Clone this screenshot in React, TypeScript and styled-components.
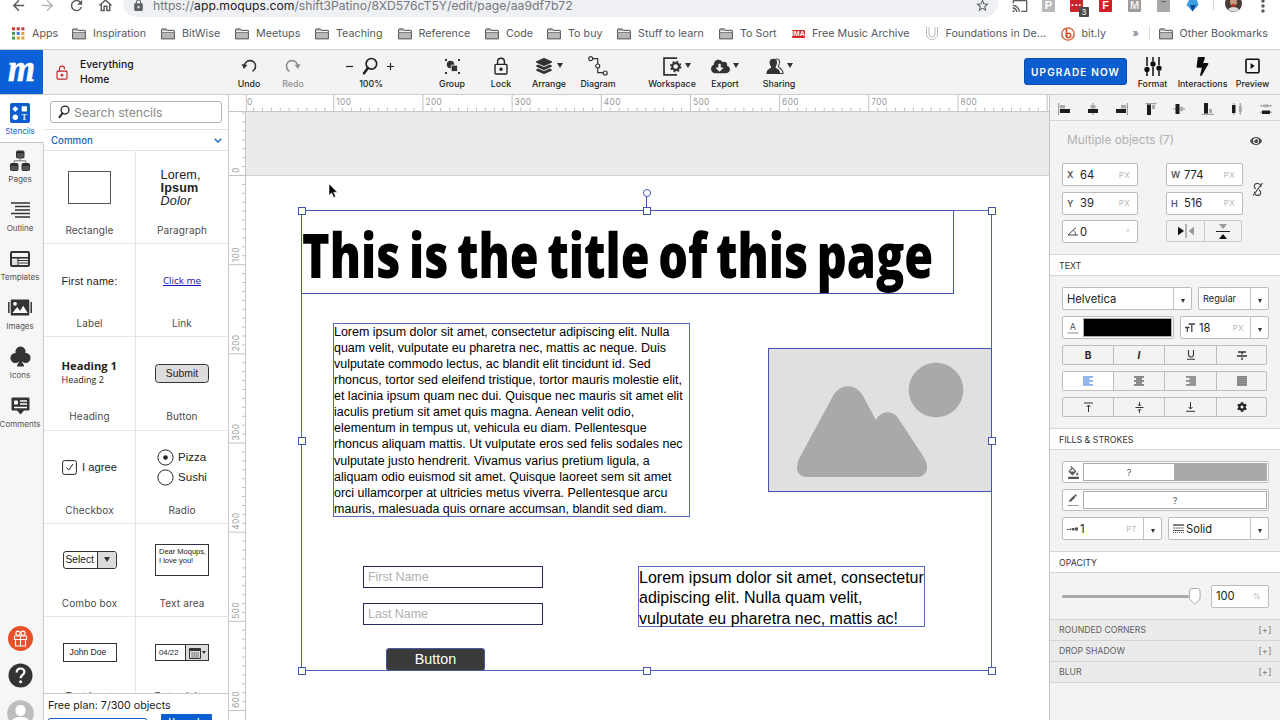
import React from "react";
import styled, { createGlobalStyle, css } from "styled-components";
import {
  MdArrowBack, MdArrowForward, MdRefresh, MdOutlineHome, MdStarBorder, MdCast, MdLock, MdMoreVert, MdEdit, MdFormatColorFill,
} from "react-icons/md";
import { FaBolt, FaCog, FaLayerGroup, FaEye, FaCloudDownloadAlt } from "react-icons/fa";
import { BsFillSuitClubFill } from "react-icons/bs";

const Global = createGlobalStyle`
  * { box-sizing: border-box; }
  body { margin: 0; overflow: hidden; background: #fff; }
  svg { display: block; flex: none; }
`;

const ui = `Inter, "Liberation Sans", sans-serif`;
const helv = `"Liberation Sans", Arial, sans-serif`;
const sel = "#4355b4";

const Page = styled.div`
  width: 1280px; height: 720px; overflow: hidden;
  display: flex; flex-direction: column;
  font-family: ${ui}; color: #333; white-space: nowrap;
`;

/* ---------- Browser chrome ---------- */
const AddressRow = styled.div`
  height: 28px; margin-top: -11px; flex: none;
  display: flex; align-items: center; color: #55585c; padding-left: 10px;
  & > svg { margin: 5px 0 0 11px; }
`;
const NavIcons = styled.div`
  display: flex; gap: 12px; width: 113px; margin-top: 5px;
`;
const Omnibox = styled.div`
  width: 875px; height: 28px; border-radius: 14px; background: #eef0f4;
  display: flex; align-items: center; padding: 5px 8px 0 9px;
`;
const Url = styled.div`
  font-size: 12.2px; line-height: 18px; color: #75787c; margin-left: 8px; flex: 1;
  b { font-weight: 400; color: #1f2124; }
`;
const Extensions = styled.div`
  display: flex; align-items: center; margin: 5px 0 0 14px; position: relative;
`;
const Ext = styled.div<{ $bg: string; $fg?: string; $gap: number }>`
  width: 13px; height: 13px; margin-left: ${(p) => p.$gap}px; border-radius: 1px;
  background: ${(p) => p.$bg}; color: ${(p) => p.$fg ?? "#fff"};
  font: 700 11px/13px ${helv}; text-align: center;
`;
const ExtDiamond = styled.svg`margin-left: 16px;`;
const ExtCount = styled.div`
  position: absolute; left: 67px; top: 9px; width: 10px; height: 10px; border-radius: 1px;
  background: #4a4a4a; color: #fff; font: 8px/10px ${ui}; text-align: center;
`;
const ChromeDivider = styled.div`
  width: 1px; height: 14px; background: #d5d7da; margin-left: 14px;
`;
const Avatar = styled.div`
  width: 17px; height: 17px; border-radius: 50%; margin-left: 11px; overflow: hidden; background: #4a3d38;
`;
const Bookmarks = styled.div`
  height: 33px; flex: none; display: flex; align-items: center; padding: 1px 0 0 12px;
  border-bottom: 1px solid #cfcfcf; font-size: 10.7px; letter-spacing: 0.03px; color: #55585c;
`;
const Bookmark = styled.div<{ $w: number; $gap?: number }>`
  display: flex; align-items: center; gap: 7px; width: ${(p) => p.$w}px;
  margin-right: ${(p) => p.$gap ?? 15}px; flex: none;
`;
const Divider = styled.div`width: 1px; height: 15px; background: #ddd; margin-right: 9px;`;
const ImaBadge = styled.span`
  width: 15px; height: 8px; background: #cf2a26; color: #fff; font: 700 7px/8px ${helv}; text-align: center; border-radius: 1px;
`;

const Folder = () => (
  <svg width="14" height="12" viewBox="0 0 14 12">
    <path d="M.6 10.9V1.6a.7.7 0 0 1 .7-.7h3.9l1.2 1.4h6.3a.7.7 0 0 1 .7.7v7.9z" fill="#b9b9b9" stroke="#555" strokeWidth="1" />
    <path d="M1.2 3.6h11.6" stroke="#f4f4f4" strokeWidth="1.1" />
    <path d="M.6 4.5h12.8" stroke="#666" strokeWidth=".7" />
  </svg>
);
const AppsIcon = () => (
  <svg width="13" height="13" viewBox="0 0 13 13">
    {["#d03a33", "#d03a33", "#d03a33", "#3f9b52", "#3d73d8", "#e0a429", "#3f9b52", "#d9a12b", "#e0a429"].map((c, i) => (
      <rect key={i} x={(i % 3) * 4.7} y={Math.floor(i / 3) * 4.6 + 0.3} width="3" height="3" fill={c} />
    ))}
  </svg>
);

/* ---------- App toolbar ---------- */
const Toolbar = styled.div`
  height: 45px; flex: none; display: flex; background: #f3f3f3; border-bottom: 1px solid #cdcdcd; padding-right: 2px;
`;
const Logo = styled.div`
  width: 43px; background: #0b5fd8; display: flex; align-items: center; justify-content: center;
`;
const DocTitle = styled.div`
  width: 184px; display: flex; align-items: center; gap: 12px; padding: 0 0 0 13px;
  font-size: 10.4px; font-weight: 500; line-height: 15.3px; color: #161616;
`;
const Tool = styled.div<{ $w: number; $ml?: number; $dim?: boolean; $black?: boolean }>`
  width: ${(p) => p.$w}px; margin-left: ${(p) => p.$ml ?? 0}px; flex: none;
  display: flex; flex-direction: column; align-items: center; padding-top: 5px;
  color: ${(p) => (p.$black ? "#0d0d0d" : "#333")};
  ${(p) => p.$dim && css`color: #8f8f8f;`}
`;
const ToolIcon = styled.div<{ $gap?: number; $shift?: number }>`
  height: 22px; display: flex; align-items: center; gap: ${(p) => p.$gap ?? 5}px; margin-left: ${(p) => p.$shift ?? 0}px;
`;
const ToolLabel = styled.div<{ $dim?: boolean }>`
  font-size: 8.8px; font-weight: 500; line-height: 13px; color: ${(p) => (p.$dim ? "#8f8f8f" : "#1d1d1d")};
`;
const Upgrade = styled.button`
  width: 103px; height: 27px; margin: 8px 0 0 auto; padding: 0; border: 1px solid #0a4cae; border-radius: 3px;
  background: #0b5dd0; color: #fff; font: 600 10px ${ui}; letter-spacing: 1.15px;
`;
const Caret = styled.span<{ $size?: number }>`
  flex: none; width: 0; height: 0; border: ${(p) => p.$size ?? 2.6}px solid transparent; border-bottom: 0;
  border-top: ${(p) => (p.$size ?? 2.6) * 1.7}px solid #333;
`;
const ToolCaret = styled(Caret)`
  border-width: 5px 3px 0; margin-top: -2px;
`;

/* ---------- Main area ---------- */
const Main = styled.div`flex: 1; min-height: 0; display: flex;`;
const Rail = styled.div`
  width: 44px; flex: none; display: flex; flex-direction: column; background: #f6f6f6;
`;
const RailItem = styled.div<{ $active?: boolean }>`
  height: ${(p) => (p.$active ? 48 : 49)}px; flex: none; display: flex; flex-direction: column; align-items: center;
  padding: 5px 3px 0 0; border-right: 1px solid #c9c9c9;
  font-size: 8.1px; line-height: 13px; letter-spacing: -0.05px; color: #555;
  ${(p) => p.$active && css`background: #fff; color: #1763c6; border-right-color: #fff; border-bottom: 1px solid #c4c4c4;`}
`;
const RailIcon = styled.div`height: 25px; display: flex; align-items: center;`;
const RailBottom = styled.div`
  flex: 1; display: flex; flex-direction: column; align-items: center; justify-content: flex-end; gap: 12px;
  border-right: 1px solid #c9c9c9; padding-right: 3px; margin-bottom: -7px;
`;

const Stencils = styled.div`
  width: 185px; flex: none; display: flex; flex-direction: column; border-right: 1px solid #c9c9c9; background: #fff;
`;
const Search = styled.div`
  height: 22px; margin: 6px 6px 6px; border: 1px solid #b3b3b3; border-radius: 3px;
  display: flex; align-items: center; gap: 4px; padding-left: 7px; font-size: 12.3px; color: #8a8a8a; flex: none;
`;
const Category = styled.div`
  height: 22px; flex: none; border: 1px solid #e3e3e3; border-width: 1px 0; padding: 0 6px 0 7px;
  display: flex; align-items: center; justify-content: space-between; font-size: 9.7px; font-weight: 500; color: #1763b8;
`;
const StencilGrid = styled.div`
  flex: 1; min-height: 0; overflow: hidden; display: grid; grid-template-columns: 92px 92px; grid-auto-rows: 93.2px;
`;
const Stencil = styled.div`
  border-bottom: 1px solid #e6e6e6; display: flex; flex-direction: column;
  &:nth-child(odd) { border-right: 1px solid #e6e6e6; }
`;
const Preview = styled.div`
  height: 72px; display: flex; align-items: center; justify-content: center; font-family: ${helv}; color: #222;
`;
const StencilName = styled.div`
  text-align: center; font-size: 10px; line-height: 15px; letter-spacing: 0.12px; color: #4b4b4b;
`;
const RectSample = styled.div`width: 43px; height: 33px; border: 1px solid #555;`;
const ParaSample = styled.div`font-size: 12.6px; line-height: 13.1px; letter-spacing: 0.15px; padding-top: 3px; width: 43px;`;
const LabelSample = styled.div`font: 10.8px ${helv}; letter-spacing: 0.18px; padding-top: 2px;`;
const LinkSample = styled.div`font: 9.8px "Open Sans", sans-serif; color: #1111b5; text-decoration: underline; padding-top: 1px;`;
const HeadingSample = styled.div`
  font: 9px/14px "Open Sans", sans-serif; width: 56px;
  strong { display: block; font-size: 11.2px; line-height: 14px; }
`;
const ButtonSample = styled.div`
  width: 54px; height: 19px; border: 1px solid #333; border-radius: 3.5px; background: #dcdcdc;
  font: 10.4px/17px ${helv}; text-align: center;
`;
const CheckSample = styled.div`display: flex; align-items: center; gap: 5px; font-size: 11.2px; padding-top: 1px;`;
const RadioSample = styled.div`
  display: grid; gap: 3px; font-size: 11.5px; padding-top: 1px;
  div { display: flex; align-items: center; gap: 4px; line-height: 17px; }
`;
const ComboSample = styled.div`
  width: 54px; height: 18px; border: 1px solid #333; border-radius: 3px; display: flex; overflow: hidden;
  font: 10.2px/16px ${helv}; padding-left: 2px; justify-content: space-between;
  & > span { width: 19px; background: #dcdcdc; border-left: 1px solid #333; display: flex; align-items: center; justify-content: center; }
`;
const AreaSample = styled.div`
  width: 54px; height: 32px; border: 1px solid #333; padding: 2px 0 0 3px;
  font: 7.5px/9.2px ${helv};
`;
const InputSample = styled.div`
  width: 54px; height: 19px; border: 1px solid #333; font: 8.6px/17px ${helv}; text-align: center; padding-right: 3px;
`;
const DateSample = styled.div`
  width: 54px; height: 17px; border: 1px solid #333; font: 7.8px/16px ${helv}; padding-left: 3px;
  display: flex; justify-content: space-between;
  & > span { width: 23px; background: #dcdcdc; border-left: 1px solid #333; display: flex; align-items: center; justify-content: center; gap: 1px; }
`;
const PlanFooter = styled.div`
  height: 27px; flex: none; overflow: hidden; border-top: 1px solid #c9c9c9; padding: 4px 0 0 4px;
  font-size: 10.7px; line-height: 16px; color: #1b1b1b;
`;
const PlanRow = styled.div`display: flex; gap: 14px;`;
const PlanBar = styled.div`width: 99px; height: 12px; margin-top: 4px; border: 1px solid #1b63c9; border-radius: 2px;`;
const PlanButton = styled.div`
  width: 51px; height: 20px; background: #0b5dd0; color: #fff; font: 600 8.6px/16px ${ui}; text-align: center; border-radius: 1px;
`;

/* ---------- Canvas ---------- */
const Workspace = styled.div`flex: 1; min-width: 0; display: flex; flex-direction: column; background: #fff;`;
const WorkBody = styled.div`flex: 1; min-height: 0; display: flex;`;
const Canvas = styled.div`
  flex: 1; position: relative; overflow: hidden; background: #fff;
`;
const Offpage = styled.div`height: 64px; background: #ebebeb; border-bottom: 1px solid #cfcfcf;`;
const Node = styled.div<{ $x: number; $y: number; $w: number; $h: number }>`
  position: absolute; left: ${(p) => p.$x}px; top: ${(p) => p.$y}px; width: ${(p) => p.$w}px; height: ${(p) => p.$h}px;
`;
const TitleNode = styled(Node)`border: 1px solid ${sel};`;
const TitleText = styled.div`
  font: 800 62px/85px "Open Sans", sans-serif; color: #000; word-spacing: -4.8px;
  transform: scaleX(0.755); transform-origin: 0 50%; width: max-content; margin-top: 1px;
`;
const TextNode = styled(Node)<{ $size: number; $lh: number }>`
  border: 1px solid #5a69ba; color: #000; font: ${(p) => p.$size}px/${(p) => p.$lh}px ${helv}; text-indent: 0;
`;
const FieldNode = styled(Node)`
  border: 1.5px solid #23285f; font: 12.4px/20px ${helv}; color: #b1b1b1; padding-left: 4px;
`;
const ButtonNode = styled(Node)`
  border: 1px solid #4a57a0; background: #3a3a3a; border-radius: 3px; color: #fff; font: 14.3px/20px ${helv}; text-align: center;
`;
const ImageNode = styled(Node)`border: 1px solid ${sel}; background: #e0e0e0;`;
const SelectionBox = styled(Node)`border: 1px solid #5061bf;`;
const Handle = styled(Node)<{ $round?: boolean }>`
  background: #fff; border: 1px solid ${sel}; ${(p) => p.$round && css`border-radius: 50%;`}
`;
const Stem = styled(Node)`background: ${sel};`;

/* ---------- Format panel ---------- */
const Panel = styled.div`
  width: 231px; flex: none; background: #f3f3f3; border-left: 1px solid #c4c4c4; display: flex; flex-direction: column;
`;
const AlignRow = styled.div`
  height: 26px; flex: none; border-bottom: 1px solid #d4d4d4; display: flex; align-items: center;
  justify-content: space-between; padding: 2px 8px 0 8px;
`;
const ObjectHead = styled.div`
  height: 42px; flex: none; display: flex; justify-content: space-between; padding: 11px 18px 0 17px;
  font-size: 11.8px; line-height: 16px; color: #b0b0b0;
  svg { margin-top: 3px; color: #444; }
`;
const Geometry = styled.div`
  height: 91px; flex: none; display: flex; align-items: flex-start; padding-left: 12px;
`;
const FieldGrid = styled.div`
  display: grid; grid-template-columns: 76px 77px; grid-auto-rows: 23px; gap: 5.5px 28px; margin-right: 9px;
`;
const boxed = css`border: 1px solid #bcbcbc; border-radius: 2px; background: #fff;`;
const Field = styled.div<{ $w?: number; $small?: boolean }>`
  ${boxed} height: 23px; display: flex; align-items: center; padding-left: 4px; flex: none;
  width: ${(p) => (p.$w ? `${p.$w}px` : "auto")}; font-size: ${(p) => (p.$small ? 9.2 : 11.2)}px; color: #222;
`;
const FieldKey = styled.span<{ $w?: number }>`
  font-size: 9px; font-weight: 600; color: #555; width: ${(p) => p.$w ?? 13}px; display: flex; align-items: center;
`;
const Unit = styled.span<{ $r?: number }>`
  margin-left: auto; padding-right: ${(p) => p.$r ?? 7}px; font-size: 8px; letter-spacing: 0.3px; color: #b8b8b8;
`;
const Drop = styled.span<{ $auto?: boolean }>`
  width: 18px; height: 21px; flex: none; border-left: 1px solid #c4c4c4; display: flex; align-items: center; justify-content: center;
  padding-top: 4px; ${(p) => p.$auto && css`margin-left: auto;`}
`;
const FlipGroup = styled.div`
  border: 1px solid #c9c9c9; border-radius: 2px; display: grid; grid-template-columns: 1fr 1fr; width: 76px;
  place-items: center; height: 22px;
  & > :last-child { border-left: 1px solid #c9c9c9; width: 100%; height: 100%; display: grid; place-items: center; }
`;
const SectionHead = styled.div`
  height: 22px; flex: none; background: #fff; border: 1px solid #d6d6d6; border-width: 1px 0;
  padding-left: 9px; font-size: 8.8px; line-height: 21px; color: #333;
`;
const SectionBody = styled.div<{ $h: number }>`
  height: ${(p) => p.$h}px; flex: none; padding: 11px 0 0 12px; display: flex; flex-direction: column; gap: 6px;
`;
const FormRow = styled.div`display: flex; gap: 6px; height: 23px;`;
const Segments = styled.div`
  width: 205px; height: 20px; border: 1px solid #bebebe; border-radius: 2px; display: grid; grid-template-columns: 50px 51px 52px 50px;
`;
const Segment = styled.div<{ $on?: boolean }>`
  display: flex; align-items: center; justify-content: center; color: #222; font: 700 10px ${ui};
  background: ${(p) => (p.$on ? "#fff" : "transparent")};
  & + & { border-left: 1px solid #bebebe; }
`;
const ColorField = styled.div<{ $w: number; $h?: number }>`
  ${boxed} width: ${(p) => p.$w}px; height: ${(p) => p.$h ?? 23}px; display: flex; align-items: stretch; padding: 0 1px 0 0;
`;
const ColorKey = styled.span`width: 20px; display: flex; align-items: center; justify-content: center; color: #555;`;
const Swatch = styled.span<{ $c: string }>`
  flex: 1; margin: 1px 0; background: ${(p) => p.$c}; border: 1px solid #aaa; display: flex; align-items: center; justify-content: center;
  font-size: 9px; color: #555;
`;
const OpacityBody = styled.div`
  height: 46px; flex: none; display: flex; align-items: center; padding-left: 12px;
`;
const Track = styled.div`width: 127px; height: 3px; background: #a9a9a9; border-radius: 2px;`;
const Collapsed = styled.div`
  height: 21px; flex: none; background: #ebebeb; border-top: 1px solid #d4d4d4; padding: 0 8px 0 9px;
  display: flex; align-items: center; justify-content: space-between; font-size: 8.7px; color: #606060;
  &:last-child { border-bottom: 1px solid #d4d4d4; height: 22px; }
  span { letter-spacing: 0.5px; color: #777; }
`;

/* ---------- Rulers ---------- */
const UNIT = 8.917;
const RulerTop = () => {
  const zero = 15.6;
  return (
    <svg width="820" height="17" viewBox="0 0 820 17">
      {Array.from({ length: 90 }, (_, i) => i + 1).map((i) => {
        const x = zero + i * UNIT;
        return <path key={i} d={`M${x} ${i % 10 ? 12.5 : 0}V17`} stroke="#c2c2c2" />;
      })}
      {Array.from({ length: 9 }, (_, i) => (
        <text key={i} x={zero + i * UNIT * 10 + 2.5} y="9.5" fontFamily="Inter" fontSize="8.4" letterSpacing=".35" fill="#999">{i * 100}</text>
      ))}
      <path d="M17.3 0V17M0 16.5H820" stroke="#c6c6c6" />
    </svg>
  );
};
const RulerLeft = () => {
  const zero = 63.5;
  return (
    <svg width="17" height="608" viewBox="0 0 17 608">
      {Array.from({ length: 68 }, (_, i) => i - 7).map((i) => {
        const y = zero + i * UNIT;
        return <path key={i} d={`M${i % 10 ? 13 : 0} ${y}H17`} stroke="#c2c2c2" />;
      })}
      {Array.from({ length: 7 }, (_, i) => (
        <text key={i} transform={`translate(10.3 ${zero + i * UNIT * 10 - 2.5}) rotate(-90)`} fontFamily="Inter" fontSize="8.4" letterSpacing=".35" fill="#999">{i * 100}</text>
      ))}
      <path d="M16.5 0V608" stroke="#c6c6c6" />
    </svg>
  );
};

/* ---------- Icons ---------- */
const Padlock = ({ color, w, h, open }: { color: string; w: number; h: number; open?: boolean }) => (
  <svg width={w} height={h} viewBox="0 0 14 18" fill="none" stroke={color} strokeWidth="1.4">
    <rect x="1" y="7.4" width="12" height="9.6" rx="1" />
    <path d={open ? "M4 7.4V4.6a3 3 0 0 1 6-.4v1" : "M3.6 7.4V4.6a3.4 3.4 0 0 1 6.8 0v2.8"} />
    <circle cx="7" cy="12.2" r="1" fill={color} />
  </svg>
);
const UndoIcon = ({ flip }: { flip?: boolean }) => (
  <svg width="16" height="16" viewBox="0 0 16 16">
    <g transform={flip ? "matrix(-1 0 0 1 16 0)" : undefined}>
      <path d="M3.2 7.6C4 4.6 6.6 2.4 9.4 2.6c3 .2 5.2 2.7 5.1 5.6 0 2.4-1.3 4.2-3 5.2" fill="none" stroke="currentColor" strokeWidth="1.6" />
      <path d="M.6 6l5.9.9-3.7 4z" fill="currentColor" />
    </g>
  </svg>
);
const Magnifier = ({ s }: { s: number }) => (
  <svg width={s} height={s * 1.1} viewBox="0 0 16 17.6" fill="none" stroke="#222">
    <circle cx="9.4" cy="6.8" r="5.3" strokeWidth="1.7" />
    <path d="M5.9 11L2 16.2" strokeWidth="2.6" strokeLinecap="round" />
  </svg>
);
const GroupIcon = () => (
  <svg width="15" height="15" viewBox="0 0 15 15" fill="#333">
    <path d="M0 0h2v2H0zM13 0h2v2h-2zM0 13h2v2H0zM13 13h2v2h-2z" />
    <circle cx="5.5" cy="5.5" r="3.7" />
    <path d="M6.2 6.2h6.3v6.3H6.2z" stroke="#f3f3f3" strokeWidth=".8" />
  </svg>
);
const DiagramIcon = () => (
  <svg width="20" height="20" viewBox="0 0 20 20" fill="none" stroke="#333" strokeWidth="1.2">
    <path d="M4.5 2.7h5.2v13.9h5.7" />
    <g fill="#f3f3f3"><circle cx="2.7" cy="2.7" r="2" /><circle cx="9.7" cy="10" r="2" /><circle cx="17.2" cy="17" r="2" /></g>
  </svg>
);
const WorkspaceIcon = () => (
  <svg width="20" height="19" viewBox="0 0 20 19">
    <path d="M15 1.2H2V17.8h13" fill="none" stroke="#333" strokeWidth="1.7" />
    <circle cx="13.7" cy="9.5" r="3.4" fill="none" stroke="#333" strokeWidth="2.2" />
    <circle cx="13.7" cy="9.5" r="5" fill="none" stroke="#333" strokeWidth="1.5" strokeDasharray="2 1.93" />
  </svg>
);
const ShareIcon = () => (
  <svg width="18" height="17" viewBox="0 0 18 17">
    <path d="M9.5 1.2c3-.9 4.3 1 4 3.3-.1 2-.8 3-1.2 3.8.2 2.5 4.7 1.7 4.7 7.2h-4" fill="#f3f3f3" stroke="#444" strokeWidth="1.1" />
    <path d="M7.3.7c2.9 0 4 1.9 3.700 4.200-.2 1.800-.8 2.700-1.300 3.600v1.300c1.300 1.300 4.500 1.300 4.500 6.200H.5c0-4.900 3.200-4.900 4.500-6.200V8.500C4.300 7.500 3.800 6.700 3.600 4.900 3.300 2.600 4.400.7 7.300.7z" fill="#333" />
  </svg>
);
const FormatIcon = () => (
  <svg width="18" height="19" viewBox="0 0 18 19" stroke="#0d0d0d" fill="#0d0d0d" strokeWidth="1.5">
    <path d="M3 0v9M3 15v4M9 0v4M9 10v9M15 0v8M15 14v5" />
    <circle cx="3" cy="12.5" r="1.9" /><circle cx="9" cy="7" r="1.9" /><circle cx="15" cy="11.2" r="1.9" />
  </svg>
);
const PreviewIcon = () => (
  <svg width="15" height="16" viewBox="0 0 15 16">
    <rect x="1" y="1.2" width="13" height="13.6" rx="1" fill="none" stroke="#0d0d0d" strokeWidth="1.6" />
    <path d="M5.6 5v6l4-3z" fill="#0d0d0d" />
  </svg>
);
const StencilsIcon = () => (
  <svg width="20" height="20" viewBox="0 0 20 20">
    <rect width="20" height="20" rx="2" fill="#0b5dd0" />
    <path d="M5.3 2.9l3 3-3 3-3-3zM11.7 3.3h5.2v5.2h-5.2z" fill="#fff" />
    <circle cx="5.3" cy="14.2" r="2.7" fill="#fff" />
    <text x="11.2" y="17.2" fontFamily="Liberation Serif" fontWeight="700" fontSize="9" fill="#d5e4fb">T</text>
  </svg>
);
const PagesIcon = () => (
  <svg width="20" height="22" viewBox="0 0 20 22">
    <g fill="#555" stroke="#333"><rect x="6.5" y="1" width="7.5" height="7" rx="1" /><rect x=".5" y="13.5" width="7.5" height="7" rx="1" /><rect x="12" y="13.5" width="7.5" height="7" rx="1" /></g>
    <path d="M7 2.500h6.500M1 15h6.500M12.500 15H19" stroke="#222" strokeWidth="1.5" />
    <path d="M10.2 8v2.800M4.200 13v-2.200h11.600V13" fill="none" stroke="#777" />
  </svg>
);
const OutlineIcon = () => (
  <svg width="20" height="16" viewBox="0 0 20 16" stroke="#333" strokeWidth="1.7">
    <path d="M1 1h19M5 4.500h15M5 8h15M1 11.500h19M5 15h15" />
  </svg>
);
const TemplatesIcon = () => (
  <svg width="20" height="16" viewBox="0 0 20 16">
    <rect x="1" y="1" width="18" height="14" rx="1" fill="#f6f6f6" stroke="#333" strokeWidth="2" />
    <path d="M1 6.800h18" stroke="#333" strokeWidth="1.7" /><path d="M8 7v8M8 9.500h11M9 12h9" stroke="#333" strokeWidth="1.2" />
    <path d="M2 9h5v5H2z" fill="#ddd" />
  </svg>
);
const ImagesIcon = () => (
  <svg width="24" height="18" viewBox="0 0 24 18">
    <path d="M.8 3v11M23.200 3v11" stroke="#333" strokeWidth="1.5" />
    <rect x="2.7" y=".5" width="18.6" height="16" rx="1" fill="#333" />
    <circle cx="7" cy="4.8" r="1.9" fill="#fff" /><path d="M4.500 14l4.600-6 3 3.700 3.200-5 4.400 7.300z" fill="#fff" />
  </svg>
);
const CommentsIcon = () => (
  <svg width="19" height="18" viewBox="0 0 19 18">
    <path d="M1.500.5h16a1 1 0 0 1 1 1v11a1 1 0 0 1-1 1H13l-3.500 4-3.500-4H1.500a1 1 0 0 1-1-1v-11a1 1 0 0 1 1-1z" fill="#333" />
    <rect x="3" y="3.5" width="4" height="4" rx="1" fill="#fff" /><path d="M9 4h7M9 7h7M3 10.500h13" stroke="#fff" strokeWidth="1.3" />
  </svg>
);
const GiftIcon = () => (
  <svg width="25" height="25" viewBox="0 0 25 25">
    <circle cx="12.5" cy="12.5" r="12.5" fill="#e8502a" />
    <g fill="none" stroke="#fff" strokeWidth="1.1"><path d="M6.500 10h12v3.500h-12zM7.500 13.500h10V20h-10zM12.500 10v10" /><circle cx="10" cy="7.2" r="2.1" /><circle cx="15" cy="7.2" r="2.1" /></g>
  </svg>
);
const HelpIcon = () => (
  <svg width="25" height="25" viewBox="0 0 25 25">
    <circle cx="12.5" cy="12.5" r="12" fill="#333" />
    <path d="M8.700 9.400c.1-5.300 7.900-5 7.700-.4-.1 3-3.800 2.900-3.800 6.200" fill="none" stroke="#fff" strokeWidth="2.2" /><circle cx="12.6" cy="18.7" r="1.5" fill="#fff" />
  </svg>
);
const UserIcon = () => (
  <svg width="27" height="27" viewBox="0 0 27 27">
    <circle cx="13.5" cy="13.5" r="13.3" fill="#bdbdbd" />
    <path d="M13.500 5c3.600 0 5.300 2.400 5 6-.2 2.500-1.500 5-5 5s-4.800-2.500-5-5c-.3-3.600 1.400-6 5-6zM4 23c1-5 5-6 9.500-6s8.500 1 9.500 6c-5 4-14 4-19 0z" fill="#fff" />
  </svg>
);
const TextLines = ({ widths, align, color }: { widths: number[]; align: "l" | "c" | "r"; color: string }) => (
  <svg width="10" height="10" viewBox="0 0 10 10">
    {widths.map((w, i) => (
      <rect key={i} x={align === "l" ? 0 : align === "r" ? 10 - w : (10 - w) / 2} y={i * 2 + 0.3} width={w} height="1.3" fill={color} />
    ))}
  </svg>
);
const AlignGlyph = ({ d, soft, line }: { d: string; soft: string; line: string }) => (
  <svg width="12" height="12" viewBox="0 0 12 12">
    <path d={line} stroke="#8c8c8c" strokeWidth="1" />
    <path d={soft} fill="#aaa" />
    <path d={d} fill="#1c1c1c" />
  </svg>
);
const aligns = [
  { line: "M.7 0v12", soft: "M2 2h5v3.500H2z", d: "M2 6h10v4H2z" },
  { line: "M6 0v12", soft: "M3.500 2h5v3.500h-5z", d: "M1 6h10v4H1z" },
  { line: "M11.300 0v12", soft: "M5 2h5v3.500H5z", d: "M0 6h10v4H0z" },
  { line: "M.5 .7h11", soft: "M7 2h3v4H7z", d: "M2 1.500h4v10.500H2z" },
  { line: "M0 6h12", soft: "M7 3.800h3v4.400H7z", d: "M2.500 1h4v10h-4z" },
  { line: "M0 11.300h12", soft: "M7 6h3v4H7z", d: "M2 0h4v10.500H2z" },
  { line: "M2.800 0v12M9.200 0v12", soft: "M8 3h2.800v6H8z", d: "M1 2h3.500v8H1z" },
  { line: "M0 2.800h12M0 9.200h12", soft: "M3.500 1.500h5v2.800h-5z", d: "M2 7.500h8v3.500H2z" },
];

const bookmarks: [string, number][] = [
  ["Inspiration", 74], ["BitWise", 59], ["Meetups", 65], ["Teaching", 67.5], ["Reference", 72.5],
  ["Code", 47], ["To buy", 55], ["Stuff to learn", 87], ["To Sort", 57.5],
];
const rail: [string, React.ReactNode][] = [
  ["Pages", <PagesIcon />], ["Outline", <OutlineIcon />], ["Templates", <TemplatesIcon />],
  ["Images", <ImagesIcon />], ["Icons", <BsFillSuitClubFill size={23} color="#333" />], ["Comments", <CommentsIcon />],
];
const Radio = ({ on }: { on?: boolean }) => (
  <svg width="17" height="17" viewBox="0 0 17 17"><circle cx="8.5" cy="8.5" r="7.6" fill="#fff" stroke="#222" />{on && <circle cx="8.5" cy="8.5" r="2.3" fill="#222" />}</svg>
);
const stencils: [string, React.ReactNode][] = [
  ["Rectangle", <RectSample />],
  ["Paragraph", <ParaSample>Lorem,<br /><b>Ipsum</b><br /><i>Dolor</i></ParaSample>],
  ["Label", <LabelSample>First name:</LabelSample>],
  ["Link", <LinkSample>Click me</LinkSample>],
  ["Heading", <HeadingSample><strong>Heading 1</strong>Heading 2</HeadingSample>],
  ["Button", <ButtonSample>Submit</ButtonSample>],
  ["Checkbox", <CheckSample><svg width="15" height="15" viewBox="0 0 15 15" fill="none" stroke="#222"><rect x=".6" y=".6" width="13.8" height="13.8" rx="2" /><path d="M4.500 7.500l2.300 2.600 4-6" /></svg>I agree</CheckSample>],
  ["Radio", <RadioSample><div><Radio on />Pizza</div><div><Radio />Sushi</div></RadioSample>],
  ["Combo box", <ComboSample>Select<span><Caret $size={3.5} /></span></ComboSample>],
  ["Text area", <AreaSample>Dear Moqups,<br />I love you!</AreaSample>],
  ["Text input", <InputSample>John Doe</InputSample>],
  ["Date picker", <DateSample>04/22<span>
    <svg width="12" height="12" viewBox="0 0 12 12"><path d="M.5 1.500h11v10H.5z" fill="#ddd" stroke="#333" /><path d="M.5 3h11" stroke="#333" strokeWidth="2" /><path d="M2.500 6h7.500M2.500 8h7.500M2.500 10h7.500" stroke="#333" strokeDasharray="1.2 .8" /></svg>
    <Caret $size={2} /></span></DateSample>],
];
const handles: [number, number][] = [
  [52, 95], [397, 95], [742, 95], [52, 325], [742, 325], [52, 555], [397, 555], [742, 555],
];

export default function App() {
  return (
    <Page>
      <Global />
      <AddressRow>
        <NavIcons>
          <MdArrowBack size={17} /><MdArrowForward size={17} color="#b4b6b8" /><MdRefresh size={17} /><MdOutlineHome size={17} />
        </NavIcons>
        <Omnibox>
          <MdLock size={13} color="#5f6368" />
          <Url>https://<b>app.moqups.com</b>/shift3Patino/8XD576cT5Y/edit/page/aa9df7b72</Url>
          <MdStarBorder size={15} />
        </Omnibox>
        <Extensions>
          <MdCast size={16} />
          <Ext $bg="#b9b9b9" $gap={14}>P</Ext>
          <Ext $bg="#c9252c" $gap={15}>···</Ext>
          <Ext $bg="#cf1f27" $gap={16}>F</Ext>
          <Ext $bg="#9c9c9c" $fg="#eee" $gap={16}>M</Ext>
          <Ext $bg="#a8a8a8" $fg="#333" $gap={16}>¨</Ext>
          <ExtDiamond width="13" height="13" viewBox="0 0 13 13"><path d="M3 1h8l1.500 5-6 6.500L.5 6z" fill="#3d9be0" /><path d="M4 6h6l-3.500 6.500z" fill="#12458f" /></ExtDiamond>
          <ExtCount>3</ExtCount>
        </Extensions>
        <ChromeDivider />
        <Avatar><svg width="17" height="17" viewBox="0 0 17 17"><circle cx="8.5" cy="7" r="3.5" fill="#c79a80" /><path d="M3 15c1-4 10-4 11 0l-5 2z" fill="#ddd" /><circle cx="8.5" cy="10.5" r="1.8" fill="#b33" /></svg></Avatar>
        <MdMoreVert size={20} />
      </AddressRow>

      <Bookmarks>
        <Bookmark $w={45}><AppsIcon />Apps</Bookmark>
        {bookmarks.map(([name, w]) => <Bookmark key={name} $w={w}><Folder />{name}</Bookmark>)}
        <Bookmark $w={118}><ImaBadge>IMA</ImaBadge>Free Music Archive</Bookmark>
        <Bookmark $w={121}>
          <svg width="14" height="15" viewBox="0 0 14 15" fill="none" stroke="#999"><path d="M1.500 1v7a5.500 5.500 0 0 0 11 0V1" strokeDasharray="1.5 .8" /><path d="M4 1v7a3 3 0 0 0 6 0V1" stroke="#bbb" /></svg>
          Foundations in De...
        </Bookmark>
        <Bookmark $w={46} $gap={26}>
          <svg width="14" height="14" viewBox="0 0 14 14" fill="none" stroke="#d4532c" strokeWidth="1.3"><circle cx="7" cy="7" r="6.2" /><path d="M5.500 2v8" strokeWidth="1.8" /><circle cx="7.5" cy="8.5" r="2.2" strokeWidth="1.6" /></svg>
          bit.ly
        </Bookmark>
        <Bookmark $w={7} $gap={9}>»</Bookmark>
        <Divider />
        <Bookmark $w={110} $gap={0}><Folder />Other Bookmarks</Bookmark>
      </Bookmarks>

      <Toolbar>
        <Logo>
          <svg width="28" height="24" viewBox="0 0 28 24"><text x="0" y="21" fontFamily="Liberation Serif, serif" fontStyle="italic" fontWeight="700" fontSize="38" fill="#fff" stroke="#fff" strokeWidth=".6" textLength="27" lengthAdjust="spacingAndGlyphs">m</text></svg>
        </Logo>
        <DocTitle><Padlock color="#c4282c" w={12} h={15} open /><div>Everything<br />Home</div></DocTitle>
        <Tool $w={44}><ToolIcon><UndoIcon /></ToolIcon><ToolLabel>Undo</ToolLabel></Tool>
        <Tool $w={44} $dim><ToolIcon><UndoIcon flip /></ToolIcon><ToolLabel $dim>Redo</ToolLabel></Tool>
        <Tool $w={112}>
          <ToolIcon $gap={9} $shift={-2}>
            <svg width="7" height="7"><path d="M0 3.500h7" stroke="#222" strokeWidth="1.2" /></svg>
            <Magnifier s={16} />
            <svg width="7" height="7"><path d="M0 3.500h7M3.500 0v7" stroke="#222" strokeWidth="1.2" /></svg>
          </ToolIcon>
          <ToolLabel>100%</ToolLabel>
        </Tool>
        <Tool $w={50}><ToolIcon><GroupIcon /></ToolIcon><ToolLabel>Group</ToolLabel></Tool>
        <Tool $w={48}><ToolIcon><Padlock color="#222" w={14} h={18} /></ToolIcon><ToolLabel>Lock</ToolLabel></Tool>
        <Tool $w={48}><ToolIcon><FaLayerGroup size={16} /><ToolCaret /></ToolIcon><ToolLabel>Arrange</ToolLabel></Tool>
        <Tool $w={50}><ToolIcon><DiagramIcon /></ToolIcon><ToolLabel>Diagram</ToolLabel></Tool>
        <Tool $w={60} $ml={19}><ToolIcon $gap={3} $shift={8}><WorkspaceIcon /><ToolCaret /></ToolIcon><ToolLabel>Workspace</ToolLabel></Tool>
        <Tool $w={46}><ToolIcon $gap={3}><FaCloudDownloadAlt size={19} /><ToolCaret /></ToolIcon><ToolLabel>Export</ToolLabel></Tool>
        <Tool $w={62}><ToolIcon $gap={3}><ShareIcon /><ToolCaret /></ToolIcon><ToolLabel>Sharing</ToolLabel></Tool>
        <Upgrade>UPGRADE NOW</Upgrade>
        <Tool $w={51} $black><ToolIcon><FormatIcon /></ToolIcon><ToolLabel>Format</ToolLabel></Tool>
        <Tool $w={49} $black><ToolIcon><FaBolt size={19} /></ToolIcon><ToolLabel>Interactions</ToolLabel></Tool>
        <Tool $w={51} $black><ToolIcon><PreviewIcon /></ToolIcon><ToolLabel>Preview</ToolLabel></Tool>
      </Toolbar>

      <Main>
        <Rail>
          <RailItem $active><RailIcon><StencilsIcon /></RailIcon>Stencils</RailItem>
          {rail.map(([name, icon]) => <RailItem key={name}><RailIcon>{icon}</RailIcon>{name}</RailItem>)}
          <RailBottom><GiftIcon /><HelpIcon /><UserIcon /></RailBottom>
        </Rail>

        <Stencils>
          <Search><Magnifier s={12} />Search stencils</Search>
          <Category>
            Common
            <svg width="8" height="5" viewBox="0 0 8 5" fill="none" stroke="#1763b8" strokeWidth="1.3"><path d="M.7.7L4 4 7.300.7" /></svg>
          </Category>
          <StencilGrid>
            {stencils.map(([name, sample]) => (
              <Stencil key={name}><Preview>{sample}</Preview><StencilName>{name}</StencilName></Stencil>
            ))}
          </StencilGrid>
          <PlanFooter>
            Free plan: 7/300 objects
            <PlanRow><PlanBar /><PlanButton>Upgrade</PlanButton></PlanRow>
          </PlanFooter>
        </Stencils>

        <Workspace>
          <RulerTop />
          <WorkBody>
            <RulerLeft />
            <Canvas>
              <Offpage />
              <SelectionBox $x={55} $y={98} $w={691} $h={461} />
              <TitleNode $x={55} $y={98} $w={653} $h={84}><TitleText>This is the title of this page</TitleText></TitleNode>
              <TextNode $x={87} $y={211} $w={357} $h={194} $size={12.47} $lh={16.07}>
                Lorem ipsum dolor sit amet, consectetur adipiscing elit. Nulla<br />
                quam velit, vulputate eu pharetra nec, mattis ac neque. Duis<br />
                vulputate commodo lectus, ac blandit elit tincidunt id. Sed<br />
                rhoncus, tortor sed eleifend tristique, tortor mauris molestie elit,<br />
                et lacinia ipsum quam nec dui. Quisque nec mauris sit amet elit<br />
                iaculis pretium sit amet quis magna. Aenean velit odio,<br />
                elementum in tempus ut, vehicula eu diam. Pellentesque<br />
                rhoncus aliquam mattis. Ut vulputate eros sed felis sodales nec<br />
                vulputate justo hendrerit. Vivamus varius pretium ligula, a<br />
                aliquam odio euismod sit amet. Quisque laoreet sem sit amet<br />
                orci ullamcorper at ultricies metus viverra. Pellentesque arcu<br />
                mauris, malesuada quis ornare accumsan, blandit sed diam.
              </TextNode>
              <ImageNode $x={522} $y={236} $w={224} $h={144}>
                <svg width="222" height="142" viewBox="0 0 222 142" fill="#a9a9a9">
                  <circle cx="167" cy="41" r="27.3" />
                  <path d="M28 119C28 115 29 112 31 108L64 47C71 34 87 34 94 47L107 71C112 61 124 61 129 69L154 107C157 112 158 114 158 118C158 124 154 128 148 128H38C32 128 28 124 28 119Z" />
                </svg>
              </ImageNode>
              <FieldNode $x={117} $y={454} $w={180} $h={22}>First Name</FieldNode>
              <FieldNode $x={117} $y={491} $w={180} $h={22}>Last Name</FieldNode>
              <ButtonNode $x={140} $y={536} $w={99} $h={23}>Button</ButtonNode>
              <TextNode $x={392} $y={454} $w={287} $h={61} $size={16.03} $lh={20.4}>
                Lorem ipsum dolor sit amet, consectetur<br />adipiscing elit. Nulla quam velit,<br />vulputate eu pharetra nec, mattis ac!
              </TextNode>
              <Stem $x={400} $y={84} $w={1} $h={12} />
              <Handle $x={396.5} $y={77} $w={8} $h={8} $round />
              {handles.map(([x, y]) => <Handle key={`${x}-${y}`} $x={x} $y={y} $w={8} $h={8} />)}
              <Node $x={82} $y={71} $w={12} $h={16}>
                <svg width="12" height="16" viewBox="0 0 12 16"><path d="M1 .8v11.600l2.700-2.500 2 4.500 2-.9-2-4.300h3.700z" fill="#000" stroke="#fff" strokeWidth=".6" /></svg>
              </Node>
            </Canvas>
          </WorkBody>
        </Workspace>

        <Panel>
          <AlignRow>{aligns.map((a) => <AlignGlyph key={a.d} {...a} />)}</AlignRow>
          <ObjectHead>Multiple objects (7)<FaEye size={12} /></ObjectHead>
          <Geometry>
            <FieldGrid>
              <Field><FieldKey>X</FieldKey>64<Unit>PX</Unit></Field>
              <Field><FieldKey>W</FieldKey>774<Unit>PX</Unit></Field>
              <Field><FieldKey>Y</FieldKey>39<Unit>PX</Unit></Field>
              <Field><FieldKey>H</FieldKey>516<Unit>PX</Unit></Field>
              <Field>
                <FieldKey><svg width="12" height="9" viewBox="0 0 12 9" fill="none" stroke="#444"><path d="M11 8H1L9 .6M6.500 3.500c1.500 1 2 2.500 2 4.500" /></svg></FieldKey>
                0<Unit>°</Unit>
              </Field>
              <FlipGroup>
                <svg width="16" height="14" viewBox="0 0 16 14"><path d="M0 2.800v8.400L6 7z" fill="#111" /><path d="M16 2.800v8.400L10.500 7z" fill="#999" /><path d="M8 0v14" stroke="#777" /></svg>
                <div><svg width="14" height="15" viewBox="0 0 14 15"><path d="M3 0h8L7 5z" fill="#999" /><path d="M3 15h8l-4-5z" fill="#111" /><path d="M0 7.500h14" stroke="#222" /></svg></div>
              </FlipGroup>
            </FieldGrid>
            <svg width="11" height="52" viewBox="0 0 11 52" fill="none" stroke="#444" strokeWidth="1.2">
              <path d="M3.500 26c-2.500-2.500-1-6 2.500-5.500 2 .2 3 1.500 3 3.500M7 27c3 2 2 5.500-1.500 5.300-2 0-3-1.500-3-3.500M4 28.500l3.500-4.500M1 32.500L10.500 20" />
            </svg>
          </Geometry>

          <SectionHead>TEXT</SectionHead>
          <SectionBody $h={152}>
            <FormRow>
              <Field $w={130}>Helvetica<Drop $auto><Caret $size={2.5} /></Drop></Field>
              <Field $w={71} $small>Regular<Drop $auto><Caret $size={2.5} /></Drop></Field>
            </FormRow>
            <FormRow>
              <ColorField $w={112}>
                <ColorKey><svg width="12" height="14" viewBox="0 0 12 14"><text x="2.8" y="9" fontFamily="Inter" fontSize="9" fill="#555">A</text><path d="M.5 12h11" stroke="#888" /></svg></ColorKey>
                <Swatch $c="#000" />
              </ColorField>
              <Field $w={89}><FieldKey $w={14}><svg width="10" height="9" viewBox="0 0 10 9" stroke="#444" strokeWidth="1.3"><path d="M3.500 1H10M6.800 1v8M0 4.500h4.500M2.300 4.500V9" /></svg></FieldKey>18<Unit $r={6}>PX</Unit><Drop><Caret $size={2.5} /></Drop></Field>
            </FormRow>
            <Segments>
              <Segment>B</Segment>
              <Segment><i>I</i></Segment>
              <Segment><svg width="8" height="10" viewBox="0 0 8 10" fill="none" stroke="#333" strokeWidth="1.1"><path d="M1.500 0v4.500a2.500 2.500 0 0 0 5 0V0M0 9.300h8" /></svg></Segment>
              <Segment><svg width="10" height="9" viewBox="0 0 10 9" stroke="#333" strokeWidth="1.4"><path d="M1 1h8M5 1v2.500M0 5h10M5 6.500V9" /></svg></Segment>
            </Segments>
            <Segments>
              <Segment $on><TextLines widths={[10, 6.5, 10, 6.5, 10]} align="l" color="#5d8fe3" /></Segment>
              <Segment><TextLines widths={[10, 6, 10, 6, 10]} align="c" color="#555" /></Segment>
              <Segment><TextLines widths={[10, 6.5, 10, 6.5, 10]} align="r" color="#666" /></Segment>
              <Segment><TextLines widths={[10, 10, 10, 10, 10]} align="l" color="#555" /></Segment>
            </Segments>
            <Segments>
              <Segment><svg width="9" height="10" viewBox="0 0 9 10" fill="none" stroke="#333"><path d="M0 1h9M4.500 10V3M2.500 5l2-2 2 2" /></svg></Segment>
              <Segment><svg width="9" height="11" viewBox="0 0 9 11" fill="none" stroke="#333"><path d="M.5 5.500h8M4.500 0v4M3 2.500L4.500 4 6 2.500M4.500 11V7M3 8.500L4.500 7 6 8.500" /></svg></Segment>
              <Segment><svg width="9" height="10" viewBox="0 0 9 10" fill="none" stroke="#333"><path d="M0 9.300h9M4.500 0v7M2.500 5l2 2 2-2" /></svg></Segment>
              <Segment><FaCog size={10} /></Segment>
            </Segments>
          </SectionBody>

          <SectionHead>FILLS &amp; STROKES</SectionHead>
          <SectionBody $h={101}>
            <ColorField $w={207} $h={22}>
              <ColorKey><MdFormatColorFill size={13} /></ColorKey><Swatch $c="#fff">?</Swatch><Swatch $c="#a9a9a9" />
            </ColorField>
            <ColorField $w={207} $h={22}>
              <ColorKey><svg width="12" height="14" viewBox="0 0 12 14"><g transform="translate(1 0)"><MdEdit size={10} /></g><path d="M.5 12.500h11" stroke="#999" /></svg></ColorKey>
              <Swatch $c="#fff">?</Swatch>
            </ColorField>
            <FormRow>
              <Field $w={100}><FieldKey><svg width="11" height="4" viewBox="0 0 11 4" fill="#555"><path d="M0 2h2v1H0zM2.500 1.500h2V3h-2zM5 1h2.500v2.500H5zM8 .5h3v3H8z" /></svg></FieldKey>1<Unit $r={6}>PT</Unit><Drop><Caret $size={2.5} /></Drop></Field>
              <Field $w={101}><FieldKey><svg width="11" height="9" viewBox="0 0 11 9" stroke="#555"><path d="M0 1h11" strokeWidth="1.5" /><path d="M0 4h11" strokeDasharray="2 .6" /><path d="M0 6.500h11" /><path d="M0 8.500h11" strokeDasharray="1 1" /></svg></FieldKey>Solid<Drop $auto><Caret $size={2.5} /></Drop></Field>
            </FormRow>
          </SectionBody>

          <SectionHead>OPACITY</SectionHead>
          <OpacityBody>
            <Track />
            <svg width="22" height="17" viewBox="0 0 22 17"><path d="M.5 3A2.500 2.500 0 0 1 3 .5h5.600A2.500 2.500 0 0 1 11.100 3v8l-5.300 5.400L.5 11z" fill="#fff" stroke="#aaa" /></svg>
            <Field $w={58}>100<Unit>%</Unit></Field>
          </OpacityBody>
          <div>
            <Collapsed>ROUNDED CORNERS<span>[+]</span></Collapsed>
            <Collapsed>DROP SHADOW<span>[+]</span></Collapsed>
            <Collapsed>BLUR<span>[+]</span></Collapsed>
          </div>
        </Panel>
      </Main>
    </Page>
  );
}
